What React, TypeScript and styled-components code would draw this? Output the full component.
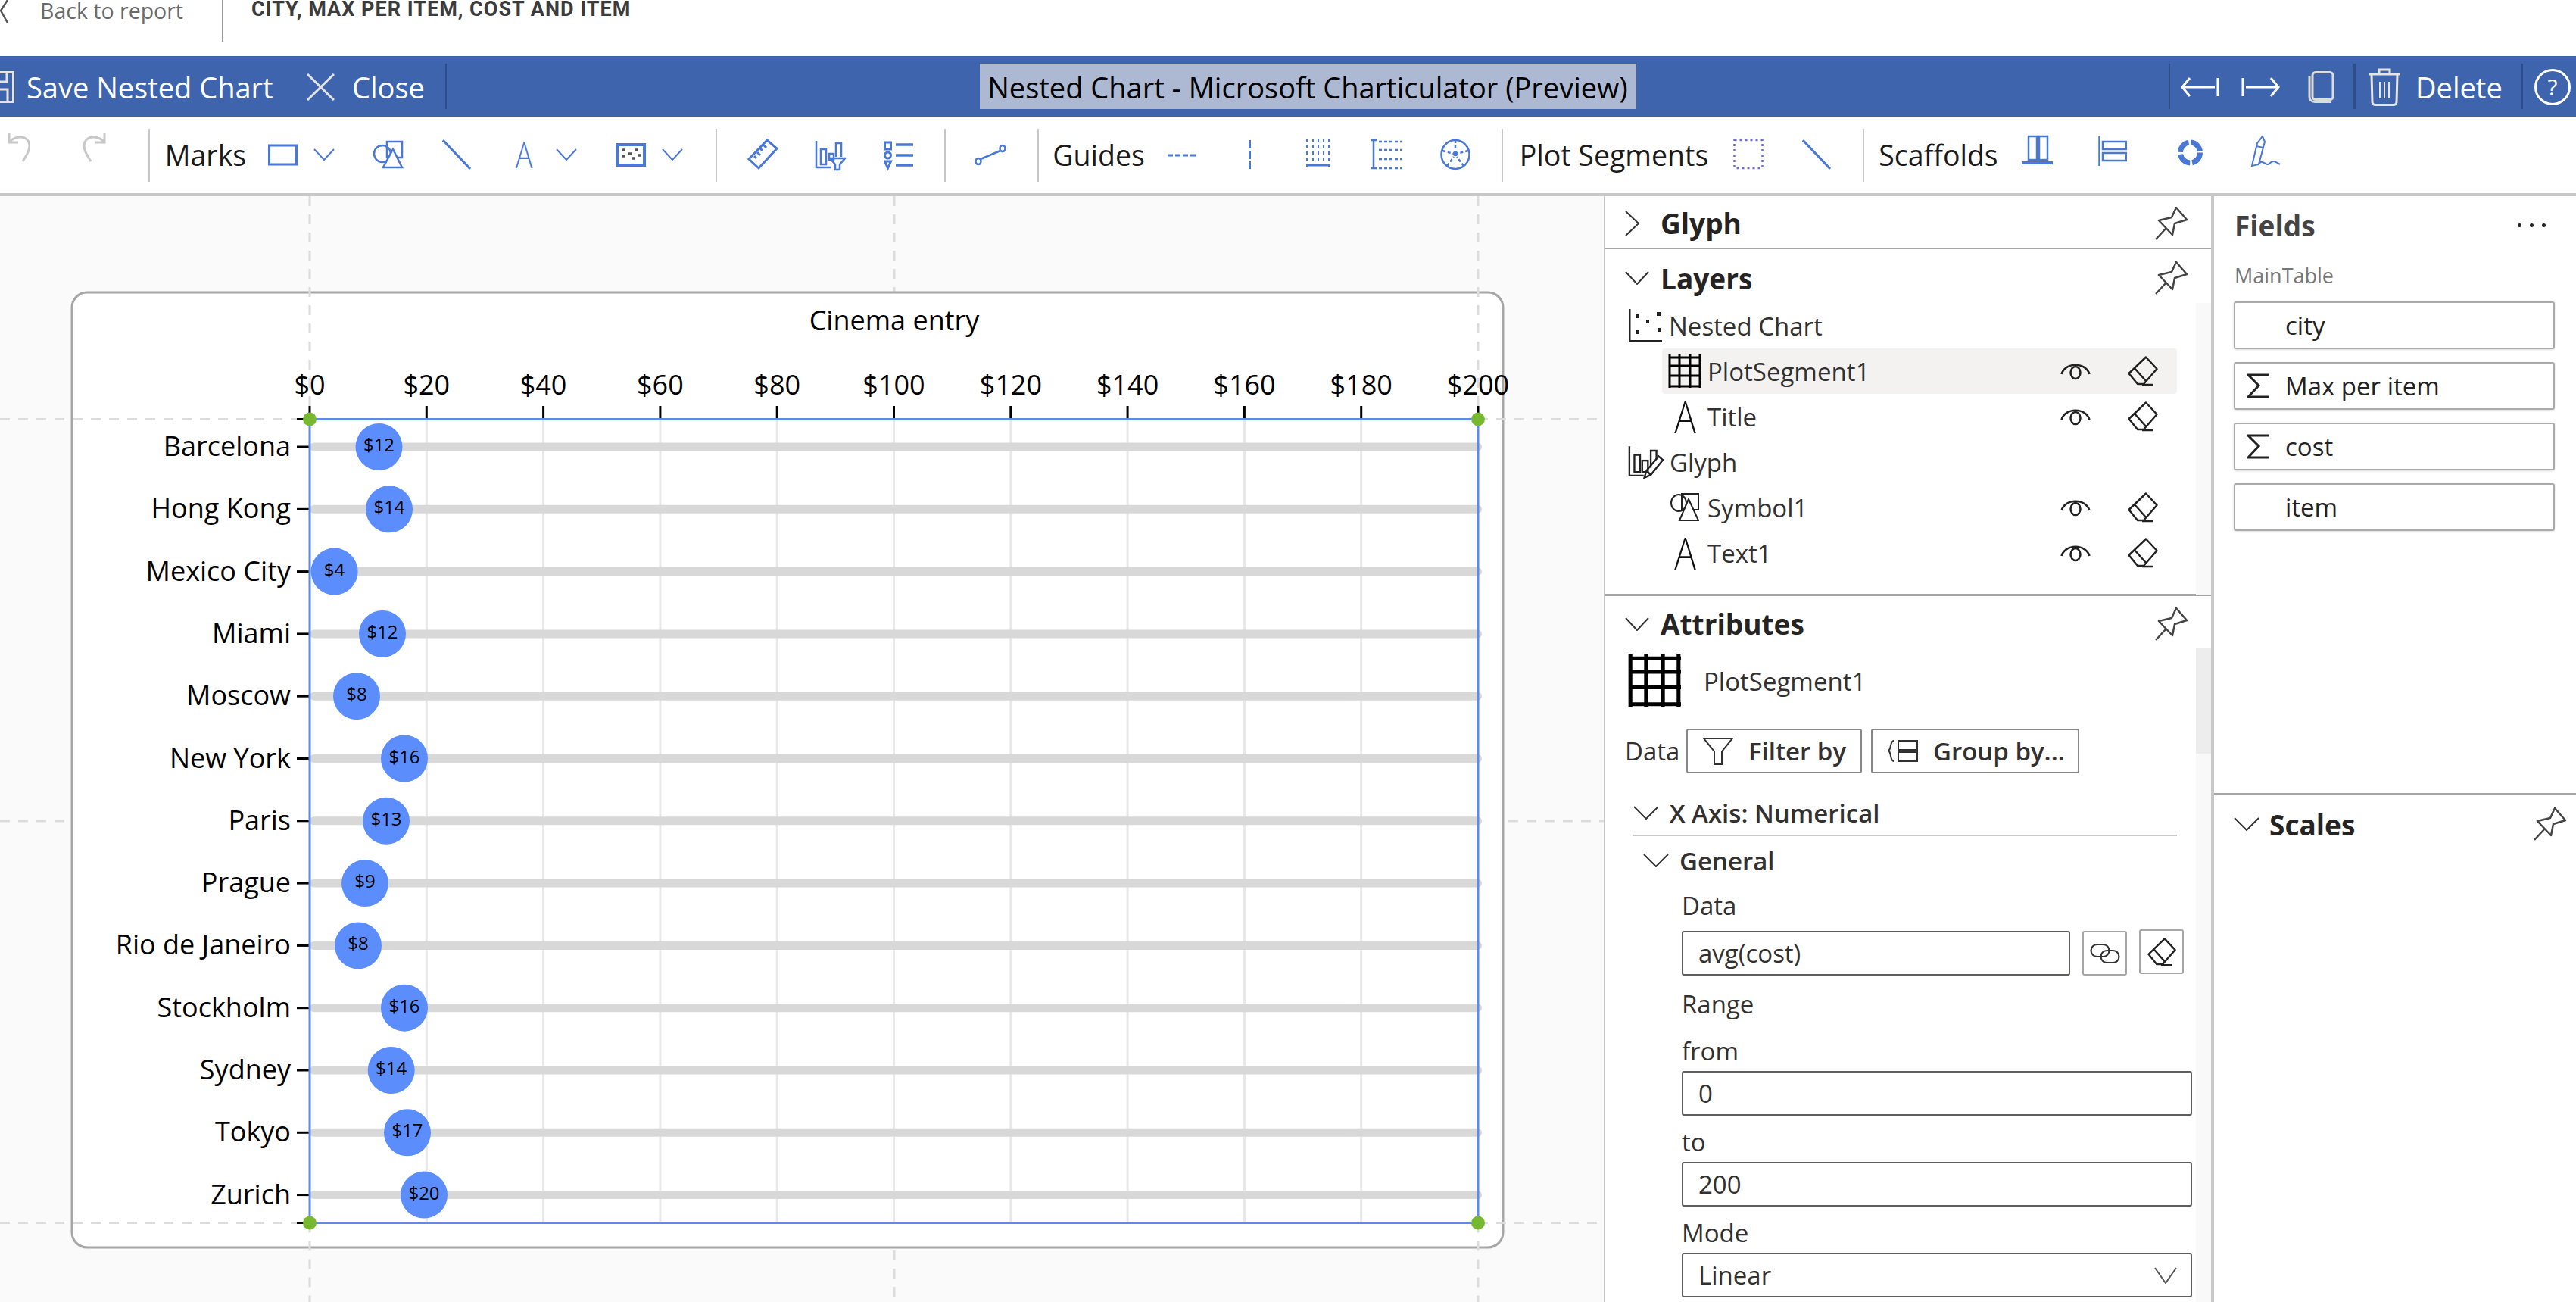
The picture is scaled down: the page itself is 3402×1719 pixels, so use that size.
import React from "react";
import styled, { createGlobalStyle } from "styled-components";

const Global = createGlobalStyle`
  html, body { margin: 0; padding: 0; background: #fff; }
  body { font-family: "Open Sans", "Noto Sans", sans-serif; color: #222; }
  #root { width: 3402px; height: 1719px; overflow: hidden; }
  * { box-sizing: border-box; }
`;

const Page = styled.div`
  width: 3402px;
  height: 1719px;
  display: flex;
  flex-direction: column;
  overflow: hidden;
`;

/* ---------- top bar ---------- */
const TopBar = styled.div`
  height: 74px;
  display: flex;
  align-items: flex-start;
  flex: none;
`;
const BackChevron = styled.svg`
  width: 12px;
  height: 32px;
  flex: none;
`;
const BackLink = styled.span`
  margin-left: 41px;
  width: 187px;
  font-size: 28.5px;
  line-height: 28px;
  color: #6a6a6a;
  white-space: nowrap;
`;
const TopDivider = styled.div`
  width: 2px;
  height: 55px;
  margin-left: 53px;
  background: #9a9a9a;
`;
const TopHeading = styled.h1`
  margin: 0 0 0 37px;
  font-family: Roboto, "Open Sans", sans-serif;
  font-weight: 700;
  font-size: 27px;
  line-height: 25px;
  letter-spacing: 1px;
  color: #3c3c3c;
  white-space: nowrap;
`;

/* ---------- blue header ---------- */
const Header = styled.header`
  height: 80px;
  flex: none;
  background: #3e64ae;
  display: flex;
  align-items: center;
  color: #fff;
  font-size: 38px;
`;
const HeaderLeft = styled.div`
  width: 590px;
  height: 60px;
  flex: none;
  display: flex;
  align-items: center;
  border-right: 2px solid #2f4d87;
  overflow: hidden;
`;
const HeaderCenter = styled.div`
  flex: 1;
  display: flex;
  justify-content: center;
`;
const TitleBox = styled.div`
  width: 867px;
  height: 60px;
  padding-top: 2px;
  background: #adb9d3;
  color: #000;
  display: flex;
  align-items: center;
  justify-content: center;
  white-space: nowrap;
`;
const HeaderRight = styled.div`
  width: 538px;
  height: 60px;
  flex: none;
  display: flex;
  align-items: center;
  border-left: 2px solid #2f4d87;
`;
const HeadSlot = styled.span<{ $ml: number; $w: number }>`
  flex: none;
  display: flex;
  align-items: center;
  padding-top: 2px;
  margin-left: ${(p) => p.$ml}px;
  width: ${(p) => p.$w}px;
  white-space: nowrap;
`;
const HeadDivider = styled.span<{ $ml: number; $w: number }>`
  flex: none;
  height: 60px;
  margin-left: ${(p) => p.$ml}px;
  width: ${(p) => p.$w}px;
  background: #2f4d87;
`;
const HelpCircle = styled.span`
  width: 48px;
  height: 48px;
  border: 3px solid #fff;
  border-radius: 50%;
  display: flex;
  align-items: center;
  justify-content: center;
  font-size: 30px;
  line-height: 1;
`;

/* ---------- toolbar ---------- */
const Toolbar = styled.div`
  height: 105px;
  flex: none;
  display: flex;
  align-items: center;
  border-bottom: 4px solid #c8c8c8;
  color: #1a1a1a;
  font-size: 37.5px;
`;
const ToolSlot = styled.span<{ $ml: number; $w: number }>`
  flex: none;
  display: flex;
  align-items: center;
  justify-content: center;
  margin-left: ${(p) => p.$ml}px;
  width: ${(p) => p.$w}px;
  height: 60px;
  white-space: nowrap;
`;
const ToolDivider = styled.span<{ $ml: number }>`
  flex: none;
  width: 2px;
  height: 70px;
  margin-left: ${(p) => p.$ml}px;
  background: #c8c8c8;
`;
const ToolGlyph = styled.span`
  font-size: 47px;
  font-weight: 300;
  line-height: 1;
  color: #4a78d6;
  transform: scaleX(0.8);
`;

/* ---------- main ---------- */
const Main = styled.div`
  flex: 1;
  min-height: 0;
  display: flex;
`;
const CanvasPane = styled.div`
  width: 2120px;
  flex: none;
  background: #fafafa;
  border-right: 2px solid #c8c8c8;
  overflow: hidden;
`;
const ChartSvg = styled.svg`
  display: block;
  width: 2118px;
  height: 1460px;
`;
const AxisText = styled.text`
  font-family: "Open Sans", sans-serif;
  font-size: 36px;
  fill: #000;
`;
const BubbleText = styled.text`
  font-family: "Open Sans", sans-serif;
  font-size: 24px;
  fill: #000;
`;

const SidePane = styled.div`
  width: 804px;
  flex: none;
  border-right: 4px solid #c8c8c8;
  display: flex;
  flex-direction: column;
  overflow: hidden;
  font-size: 33px;
  color: #323130;
`;
const SectionHead = styled.div<{ $h: number; $pt: number; $pr?: number }>`
  height: ${(p) => p.$h}px;
  padding-top: ${(p) => p.$pt}px;
  flex: none;
  display: flex;
  align-items: center;
  padding-left: 26px;
  padding-right: ${(p) => p.$pr ?? 30}px;
`;
const HeadChevronSlot = styled.span`
  width: 47px;
  flex: none;
  display: flex;
  align-items: center;
  justify-content: flex-start;
`;
const SectionTitle = styled.span`
  flex: 1;
  font-size: 37px;
  font-weight: 700;
  color: #252423;
`;
const CollapsedSection = styled.section`
  height: 70px;
  flex: none;
  border-bottom: 2px solid #a6a6a6;
`;
const LayersSection = styled.section`
  height: 458px;
  flex: none;
  border-bottom: 3px solid #a6a6a6;
`;
const SectionBody = styled.div`
  display: flex;
`;
const BodyContent = styled.div`
  flex: 1;
  min-width: 0;
`;
const ScrollTrack = styled.div<{ $h: number }>`
  width: 20px;
  flex: none;
  height: ${(p) => p.$h}px;
  background: #f9f9f9;
`;
const ScrollThumb = styled.div`
  height: 139px;
  background: #ededed;
`;
const TreeRow = styled.div<{ $child?: boolean; $active?: boolean }>`
  height: 60px;
  display: flex;
  align-items: center;
  margin-left: ${(p) => (p.$child ? 75 : 30)}px;
  margin-right: 25px;
  padding-left: ${(p) => (p.$child ? 8 : 0)}px;
  padding-right: 25px;
  border-radius: 4px;
  background: ${(p) => (p.$active ? "#f3f2f1" : "transparent")};
`;
const TreeIconSlot = styled.span<{ $w: number }>`
  width: ${(p) => p.$w}px;
  flex: none;
  display: flex;
  align-items: center;
  justify-content: center;
`;
const TreeLetter = styled.span`
  font-size: 58px;
  font-weight: 300;
  line-height: 1;
  color: #111;
  transform: scaleX(0.82);
`;
const TreeLabel = styled.span`
  flex: 1;
  margin-left: 8px;
  white-space: nowrap;
`;
const TreeActions = styled.span`
  display: flex;
  align-items: center;
  gap: 49px;
`;

const AttrSection = styled.section`
  flex: 1;
  min-height: 0;
  overflow: hidden;
`;
const IdentityRow = styled.div`
  margin-top: 7px;
  height: 70px;
  display: flex;
  align-items: center;
  padding-left: 30px;
  gap: 30px;
`;
const IdentityName = styled.span`
  padding-top: 3px;
`;
const DataRow = styled.div`
  margin-top: 29px;
  height: 59px;
  display: flex;
  align-items: center;
  padding-left: 26px;
  gap: 12px;
`;
const DataLabel = styled.span`
  width: 69px;
`;
const OutlineButton = styled.div<{ $w: number }>`
  width: ${(p) => p.$w}px;
  height: 59px;
  border: 2px solid #8a8886;
  border-radius: 3px;
  display: flex;
  align-items: center;
  padding-left: 20px;
  gap: 20px;
  font-weight: 600;
  color: #323130;
  white-space: nowrap;
`;
const AxisHead = styled.div`
  margin: 23px 25px 0 37px;
  height: 60px;
  border-bottom: 2px solid #c8c8c8;
  display: flex;
  align-items: center;
  gap: 14px;
  font-weight: 600;
`;
const GeneralHead = styled.div`
  margin: 0 0 0 50px;
  height: 64px;
  display: flex;
  align-items: center;
  gap: 14px;
  font-weight: 600;
`;
const FieldBlock = styled.div`
  padding-left: 101px;
  padding-right: 5px;
`;
const FieldLabel = styled.div<{ $mt: number }>`
  margin-top: ${(p) => p.$mt}px;
  height: 40px;
  line-height: 40px;
`;
const InputRow = styled.div`
  margin-top: 13px;
  display: flex;
  align-items: flex-start;
`;
const ValueBox = styled.div<{ $w?: number; $mt?: number }>`
  width: ${(p) => (p.$w ? `${p.$w}px` : "100%")};
  height: 59px;
  margin-top: ${(p) => p.$mt ?? 0}px;
  border: 2px solid #605e5c;
  border-radius: 3px;
  display: flex;
  align-items: center;
  justify-content: space-between;
  padding: 0 18px 0 20px;
`;
const SquareButton = styled.div<{ $ml: number; $mt: number }>`
  width: 59px;
  height: 59px;
  margin-left: ${(p) => p.$ml}px;
  margin-top: ${(p) => p.$mt}px;
  border: 2px solid #a6a6a6;
  border-radius: 3px;
  display: flex;
  align-items: center;
  justify-content: center;
`;

/* ---------- fields pane ---------- */
const FieldsPane = styled.div`
  flex: 1;
  min-width: 0;
  display: flex;
  flex-direction: column;
  font-size: 33px;
`;
const FieldsBody = styled.div`
  height: 790px;
  flex: none;
  border-bottom: 2px solid #a6a6a6;
  padding: 0 28px 0 26px;
`;
const FieldsHead = styled.div`
  height: 76px;
  display: flex;
  align-items: center;
  justify-content: space-between;
  padding-left: 1px;
  padding-right: 12px;
`;
const FieldsTitle = styled.span`
  font-size: 37px;
  font-weight: 700;
  color: #444;
`;
const MoreDots = styled.span`
  display: flex;
  gap: 11px;
`;
const Dot = styled.i`
  width: 5px;
  height: 5px;
  background: #222;
  border-radius: 50%;
`;
const TableName = styled.div`
  height: 63px;
  padding: 9px 0 0 1px;
  font-size: 27px;
  line-height: 40px;
  color: #777;
`;
const FieldList = styled.div`
  display: flex;
  flex-direction: column;
  gap: 17px;
`;
const FieldBox = styled.div`
  height: 63px;
  border: 2px solid #aaa;
  border-radius: 3px;
  box-shadow: 0 1px 3px rgba(0, 0, 0, 0.15);
  display: flex;
  align-items: center;
  padding-left: 15px;
  color: #222;
`;
const SigmaSlot = styled.span`
  width: 51px;
  flex: none;
  display: flex;
  align-items: center;
`;

/* ---------- icons ---------- */
const BLUE = "#4a78d6";
const Ico = ({ w, h = 60, children, stroke = BLUE, sw = 3 }: any) => (
  <svg width={w} height={h} viewBox={`0 0 ${w} ${h}`} fill="none" stroke={stroke} strokeWidth={sw}>
    {children}
  </svg>
);
const Chevron = () => (
  <Ico w={28} sw={2}>
    <path d="M1 22 L14 36 L27 22" />
  </Ico>
);
const DownChevron = ({ w = 32, h = 18, stroke = "#333" }: any) => (
  <svg width={w} height={h} viewBox={`0 0 ${w} ${h}`} fill="none" stroke={stroke} strokeWidth={2}>
    <path d={`M1 1 L${w / 2} ${h - 1} L${w - 1} 1`} />
  </svg>
);
const RightChevron = () => (
  <svg width="20" height="34" viewBox="0 0 20 34" fill="none" stroke="#333" strokeWidth={2}>
    <path d="M1 1 L18 17 L1 33" />
  </svg>
);
const Pin = () => (
  <svg width="44" height="44" viewBox="0 0 44 44" fill="none" stroke="#444" strokeWidth={2.5} strokeLinejoin="round">
    <path d="M28 1 L42 17 L26 22 L23 37 L5 18 L22 14 Z M1 43 L14 29" />
  </svg>
);
const Eye = () => (
  <svg width="40" height="26" viewBox="0 0 40 26" fill="none" stroke="#222" strokeWidth={2.5}>
    <path d="M1.5 17 A19 16 0 0 1 38.5 17" />
    <ellipse cx="20" cy="15" rx="6.5" ry="8" />
  </svg>
);
const Eraser = ({ s = 40 }: any) => (
  <svg width={s} height={s} viewBox="0 0 40 40" fill="none" stroke="#222" strokeWidth={2.5} strokeLinejoin="round">
    <path d="M24 1.5 L38.5 17 L21 37 L13 37 L1.5 23 Z M8 15 L24 33 M19 38 H34" />
  </svg>
);
const GridIcon = ({ s, sw }: any) => (
  <svg width={s} height={s} viewBox="0 0 44 44" fill="none" stroke="#000" strokeWidth={sw}>
    <path d="M2 4 H44 M2 15 H44 M2 28 H44 M2 42 H44 M2 0 V44 M15 0 V44 M29 0 V44 M42 0 V44" />
  </svg>
);
const ChartDots = () => (
  <svg width="44" height="44" viewBox="0 0 44 44" fill="#222" stroke="none">
    <path d="M0 0 H2.5 V41 H44 V44 H0 Z" />
    <rect x="10" y="7" width="4" height="5" />
    <rect x="37" y="4" width="5" height="5" />
    <rect x="23" y="14" width="4" height="5" />
    <rect x="10" y="28" width="4" height="5" />
    <rect x="39" y="25" width="4" height="5" />
  </svg>
);
const GlyphChart = () => (
  <svg width="47" height="44" viewBox="0 0 50 44" fill="none" stroke="#222" strokeWidth={2.5}>
    <path d="M2 0 V41 H22" />
    <rect x="9" y="12" width="8" height="24" />
    <rect x="20" y="20" width="8" height="16" />
    <path d="M32 30 V6 H40 V18" />
    <path d="M23 44 L26 34 L43 14 L49 19 L32 40 Z M26 34 L32 40" />
  </svg>
);
const SymbolSmall = () => (
  <svg width="38" height="38" viewBox="0 0 38 38" fill="none" stroke="#222" strokeWidth={2}>
    <ellipse cx="11" cy="13" rx="10" ry="11" />
    <rect x="15" y="1" width="22" height="21" />
    <path d="M24 8 L37 36 H12 Z" fill="#fff" />
  </svg>
);
const FunnelIcon = () => (
  <svg width="40" height="36" viewBox="0 0 40 36" fill="none" stroke="#323130" strokeWidth={2}>
    <path d="M1 1 H39 L25 18 V35 H15 V18 Z" />
  </svg>
);
const GroupIcon = () => (
  <svg width="40" height="30" viewBox="0 0 40 30" fill="none" stroke="#323130" strokeWidth={2}>
    <rect x="14" y="1" width="25" height="12" />
    <rect x="14" y="16" width="25" height="12" />
    <path d="M8 1 C3 1 5 12 1 14 C5 16 3 28 8 28" />
  </svg>
);
const LinkIcon = () => (
  <svg width="40" height="28" viewBox="0 0 40 28" fill="none" stroke="#333" strokeWidth={2.2}>
    <rect x="1.5" y="2" width="24" height="16" rx="8" />
    <rect x="14.5" y="10" width="24" height="16" rx="8" />
  </svg>
);
const Sigma = () => (
  <svg width="30" height="33" viewBox="0 0 30 33" fill="none" stroke="#222" strokeWidth={3}>
    <path d="M0 2 H30 M2 2 L16 16 L2 31 H30" />
  </svg>
);

const MARK = { rows: [
  ["Barcelona", "$12", 500.5], ["Hong Kong", "$14", 514], ["Mexico City", "$4", 441.6],
  ["Miami", "$12", 505], ["Moscow", "$8", 471], ["New York", "$16", 534],
  ["Paris", "$13", 510], ["Prague", "$9", 482], ["Rio de Janeiro", "$8", 473],
  ["Stockholm", "$16", 534], ["Sydney", "$14", 516.7], ["Tokyo", "$17", 538], ["Zurich", "$20", 560],
] as [string, string, number][] };

const TICKS = ["$0","$20","$40","$60","$80","$100","$120","$140","$160","$180","$200"];
const PL = 409, PR = 1952, PT = 553.5, PB = 1614.5;
const DASH = { stroke: "#dcdcdc", strokeWidth: 3, strokeDasharray: "13 11" };

const Chart = () => (
  <ChartSvg viewBox="0 259 2118 1460">
    <g {...DASH}>
      <path d="M1181 259 V1719 M0 1084 H2118" />
    </g>
    <rect x="95" y="386" width="1890" height="1261" rx="20" fill="#fff" stroke="#a6a6a6" strokeWidth="3" />
    <g {...DASH}>
      <path d={`M${PL} 259 V${PT} M${PR} 259 V${PT} M${PL} ${PB} V1719 M${PR} ${PB} V1719 M0 ${PT} H${PL} M${PR} ${PT} H2118 M0 ${PB} H${PL} M${PR} ${PB} H2118`} />
    </g>
    <AxisText x="1181" y="436" textAnchor="middle">Cinema entry</AxisText>
    {TICKS.map((t, i) => {
      const x = PL + (i * (PR - PL)) / 10;
      return (
        <g key={t}>
          {i > 0 && i < 10 && <line x1={x} x2={x} y1={PT} y2={PB} stroke="#e8e8e8" strokeWidth="3" />}
          <line x1={x} x2={x} y1="536" y2={PT} stroke="#000" strokeWidth="3" />
          <AxisText x={x} y="521" textAnchor="middle">{t}</AxisText>
        </g>
      );
    })}
    {MARK.rows.map(([city], i) => {
      const y = 590 + i * 82.3;
      return (
        <g key={city}>
          <rect x={PL} y={y - 5.5} width={1548} height="11" rx="5.5" fill="#d8d8d8" />
          <line x1="392" x2={PL} y1={y} y2={y} stroke="#000" strokeWidth="3" />
          <AxisText x="384" y={y + 12} textAnchor="end">{city}</AxisText>
        </g>
      );
    })}
    <line x1="392" x2={PL} y1={PT} y2={PT} stroke="#000" strokeWidth="3" />
    <line x1="392" x2={PL} y1={PB} y2={PB} stroke="#000" strokeWidth="3" />
    <rect x={PL} y={PT} width={PR - PL} height={PB - PT} fill="none" stroke="#5f89e6" strokeWidth="3" />
    {MARK.rows.map(([city, v, cx], i) => {
      const y = 590 + i * 82.3;
      return (
        <g key={city}>
          <circle cx={cx} cy={y} r="31" fill="#5b8dfc" />
          <BubbleText x={cx} y={y + 6} textAnchor="middle">{v}</BubbleText>
        </g>
      );
    })}
    {[[PL, PT], [PR, PT], [PL, PB], [PR, PB]].map(([x, y], i) => (
      <circle key={i} cx={x} cy={y} r="9" fill="#76b82f" />
    ))}
  </ChartSvg>
);

const Tools = () => (
  <Toolbar>
    <ToolSlot $ml={10} $w={30}>
      <Ico w={30} stroke="#c8c8c8"><path d="M2 1 V13 H14 M2 13 C10 3 28 3 29 17 C29 24 25 30 20 38" /></Ico>
    </ToolSlot>
    <ToolSlot $ml={70} $w={30}>
      <Ico w={30} stroke="#c8c8c8"><path d="M28 1 V13 H16 M28 13 C20 3 2 3 1 17 C1 24 5 30 10 38" /></Ico>
    </ToolSlot>
    <ToolDivider $ml={56} />
    <ToolSlot $ml={21} $w={105}>Marks</ToolSlot>
    <ToolSlot $ml={30} $w={39}><Ico w={39}><rect x="1.5" y="17" width="36" height="25" /></Ico></ToolSlot>
    <ToolSlot $ml={21} $w={28}><Chevron /></ToolSlot>
    <ToolSlot $ml={51} $w={40}>
      <Ico w={40} sw={2.5}>
        <ellipse cx="12" cy="28" rx="11" ry="11" />
        <rect x="18" y="12" width="20" height="21" />
        <path d="M26 22 L38 46 H13 Z" fill="#fff" />
      </Ico>
    </ToolSlot>
    <ToolSlot $ml={51} $w={38}><Ico w={38}><path d="M1 10 L37 48" /></Ico></ToolSlot>
    <ToolSlot $ml={58} $w={24}><ToolGlyph>A</ToolGlyph></ToolSlot>
    <ToolSlot $ml={30} $w={28}><Chevron /></ToolSlot>
    <ToolSlot $ml={51} $w={40}>
      <Ico w={40} sw={4}>
        <rect x="2" y="16" width="36" height="27" />
        <path d="M9 23 H13 M17 28 H21 M25 23 H29 M9 31 H13 M21 34 H25 M29 30 H33" strokeWidth={3.5} stroke="#555" />
      </Ico>
    </ToolSlot>
    <ToolSlot $ml={21} $w={28}><Chevron /></ToolSlot>
    <ToolDivider $ml={43} />
    <ToolSlot $ml={40} $w={40}>
      <Ico w={40}>
        <path d="M26 10 L39 21 L15 47 L2 35 Z M21 16 L25 20 M17 21 L20 24 M13 26 L17 30 M9 31 L12 34" />
      </Ico>
    </ToolSlot>
    <ToolSlot $ml={49} $w={41}>
      <Ico w={41} sw={2.5}>
        <path d="M2 11 V46 H22" />
        <rect x="8" y="22" width="7" height="20" />
        <rect x="19" y="28" width="6" height="8" />
        <path d="M28 32 V14 H35 V32" />
        <path d="M20 34 H40 L33 42 V49 H27 V42 Z" />
      </Ico>
    </ToolSlot>
    <ToolSlot $ml={50} $w={39}>
      <Ico w={39}>
        <rect x="1.5" y="13" width="8" height="9" />
        <circle cx="5.5" cy="30" r="4" />
        <path d="M1.5 38 H9.5 L5.5 47 Z" />
        <path d="M16 16 H39 M16 30 H39 M16 43 H39" strokeWidth={3.5} />
      </Ico>
    </ToolSlot>
    <ToolDivider $ml={41} />
    <ToolSlot $ml={38} $w={42}>
      <Ico w={42} sw={2.5}>
        <ellipse cx="5" cy="38" rx="3.5" ry="4" />
        <ellipse cx="37" cy="21" rx="3.5" ry="4" />
        <path d="M8 35 L34 24" />
      </Ico>
    </ToolSlot>
    <ToolDivider $ml={41} />
    <ToolSlot $ml={19} $w={120}>Guides</ToolSlot>
    <ToolSlot $ml={31} $w={39}><Ico w={39}><path d="M0 30 H39" strokeDasharray="7 3" /></Ico></ToolSlot>
    <ToolSlot $ml={68} $w={3}><Ico w={3}><path d="M1.5 10 V48" strokeDasharray="11 3" /></Ico></ToolSlot>
    <ToolSlot $ml={72} $w={33}>
      <Ico w={33} sw={2}>
        <path d="M2 9 V47 M31 9 V47 M10 9 V40 M17 9 V40 M24 9 V40" strokeDasharray="4 4" />
        <path d="M2 43 H31" strokeWidth={3} />
      </Ico>
    </ToolSlot>
    <ToolSlot $ml={54} $w={40}>
      <Ico w={40} sw={2.5}>
        <path d="M3 9 V48 M0 10 H7 M0 47 H7" />
        <path d="M10 12 H40 M10 23 H40 M10 35 H40 M10 47 H40" strokeDasharray="4 3" />
      </Ico>
    </ToolSlot>
    <ToolSlot $ml={51} $w={40}>
      <Ico w={40} sw={2.5}>
        <ellipse cx="20" cy="29" rx="18.5" ry="19" />
        <path d="M20 10 V25 M3 24 L18 28 M37 24 L22 28 M9 44 L18 32 M31 44 L22 32" strokeDasharray="4 3" />
        <circle cx="20" cy="28" r="2" fill={BLUE} />
      </Ico>
    </ToolSlot>
    <ToolDivider $ml={41} />
    <ToolSlot $ml={19} $w={255}>Plot Segments</ToolSlot>
    <ToolSlot $ml={30} $w={40}>
      <Ico w={40} stroke="#6f6cd6" sw={2.5}><rect x="1.5" y="10" width="37" height="37" strokeDasharray="3 4" /></Ico>
    </ToolSlot>
    <ToolSlot $ml={51} $w={38}><Ico w={38}><path d="M1 10 L37 48" /></Ico></ToolSlot>
    <ToolDivider $ml={42} />
    <ToolSlot $ml={19} $w={158}>Scaffolds</ToolSlot>
    <ToolSlot $ml={31} $w={41}>
      <Ico w={41} sw={2.5}>
        <rect x="9" y="5" width="11" height="31" />
        <rect x="23" y="5" width="11" height="31" />
        <path d="M0 40 H41" strokeWidth={4} />
      </Ico>
    </ToolSlot>
    <ToolSlot $ml={60} $w={38}>
      <Ico w={38} sw={2.5}>
        <path d="M1.5 5 V44" />
        <rect x="6" y="12" width="31" height="10" />
        <rect x="6" y="27" width="31" height="10" />
      </Ico>
    </ToolSlot>
    <ToolSlot $ml={67} $w={33}>
      <Ico w={33} sw={7}>
        <ellipse cx="16.5" cy="26.5" rx="13" ry="13.5" strokeDasharray="18 3" />
      </Ico>
    </ToolSlot>
    <ToolSlot $ml={63} $w={40}>
      <Ico w={40} sw={2}>
        <path d="M2 44 L9 14 L16 5 L19 12 L11 42 Z M8 18 L17 20" />
        <path d="M10 43 C16 32 20 46 25 41 S32 38 39 42" />
      </Ico>
    </ToolSlot>
  </Toolbar>
);

const RowActions = () => (
  <TreeActions>
    <Eye />
    <Eraser />
  </TreeActions>
);

const App = () => (
  <Page>
    <Global />
    <TopBar>
      <BackChevron viewBox="0 0 12 32" fill="none" stroke="#555" strokeWidth={2.5}>
        <path d="M10 0 L1 14 L10 30" />
      </BackChevron>
      <BackLink>Back to report</BackLink>
      <TopDivider />
      <TopHeading>CITY, MAX PER ITEM, COST AND ITEM</TopHeading>
    </TopBar>

    <Header>
      <HeaderLeft>
        <HeadSlot $ml={-23} $w={42}>
          <svg width="42" height="42" viewBox="0 0 42 42" fill="none" stroke="#e4e4e4" strokeWidth={3}>
            <path d="M1.5 1.5 H40.5 V40.5 H1.5 Z M12 1.5 V14 H32 V1.5 M10 40.5 V24 H33 V40.5" />
          </svg>
        </HeadSlot>
        <HeadSlot $ml={16} $w={354}>Save Nested Chart</HeadSlot>
        <HeadSlot $ml={16} $w={37}>
          <svg width="37" height="36" viewBox="0 0 37 36" fill="none" stroke="#e4e4e4" strokeWidth={3}>
            <path d="M1 1 L36 35 M36 1 L1 35" />
          </svg>
        </HeadSlot>
        <HeadSlot $ml={23} $w={95}>Close</HeadSlot>
      </HeaderLeft>
      <HeaderCenter>
        <TitleBox>Nested Chart - Microsoft Charticulator (Preview)</TitleBox>
      </HeaderCenter>
      <HeaderRight>
        <HeadSlot $ml={14} $w={51}>
          <svg width="51" height="26" viewBox="0 0 51 26" fill="none" stroke="#fff" strokeWidth={3}>
            <path d="M2 13 H45 M12 1 L2 13 L12 25 M49 1 V25" />
          </svg>
        </HeadSlot>
        <HeadSlot $ml={29} $w={51}>
          <svg width="51" height="26" viewBox="0 0 51 26" fill="none" stroke="#fff" strokeWidth={3}>
            <path d="M49 13 H6 M39 1 L49 13 L39 25 M2 1 V25" />
          </svg>
        </HeadSlot>
        <HeadSlot $ml={37} $w={35}>
          <svg width="35" height="42" viewBox="0 0 35 42" fill="none" stroke="#dcdcdc" strokeWidth={3}>
            <rect x="6" y="1.5" width="27" height="36" rx="4" />
            <path d="M2 6 V34 C2 38 5 40.5 9 40.5 H30" />
          </svg>
        </HeadSlot>
        <HeadDivider $ml={25} $w={3} />
        <HeadSlot $ml={17} $w={42}>
          <svg width="42" height="50" viewBox="0 0 42 50" fill="none" stroke="#e4e4e4" strokeWidth={3}>
            <path d="M0 8 H42 M14 8 V2 H28 V8 M4 8 L5 45 C5 47 7 48.5 9 48.5 H33 C35 48.5 37 47 37 45 L38 8" />
            <path d="M15 18 V40 M21 18 V40 M27 18 V40" strokeWidth={2} />
          </svg>
        </HeadSlot>
        <HeadSlot $ml={20} $w={112}>Delete</HeadSlot>
        <HeadDivider $ml={28} $w={2} />
        <HeadSlot $ml={15} $w={48}><HelpCircle>?</HelpCircle></HeadSlot>
      </HeaderRight>
    </Header>

    <Tools />

    <Main>
      <CanvasPane>
        <Chart />
      </CanvasPane>

      <SidePane>
        <CollapsedSection>
          <SectionHead $h={68} $pt={3}>
            <HeadChevronSlot><RightChevron /></HeadChevronSlot>
            <SectionTitle>Glyph</SectionTitle>
            <Pin />
          </SectionHead>
        </CollapsedSection>

        <LayersSection>
          <SectionHead $h={71} $pt={5}>
            <HeadChevronSlot><DownChevron /></HeadChevronSlot>
            <SectionTitle>Layers</SectionTitle>
            <Pin />
          </SectionHead>
          <SectionBody>
            <BodyContent>
              <TreeRow>
                <TreeIconSlot $w={46}><ChartDots /></TreeIconSlot>
                <TreeLabel>Nested Chart</TreeLabel>
              </TreeRow>
              <TreeRow $child $active>
                <TreeIconSlot $w={44}><GridIcon s={44} sw={3} /></TreeIconSlot>
                <TreeLabel>PlotSegment1</TreeLabel>
                <RowActions />
              </TreeRow>
              <TreeRow $child>
                <TreeIconSlot $w={44}><TreeLetter>A</TreeLetter></TreeIconSlot>
                <TreeLabel>Title</TreeLabel>
                <RowActions />
              </TreeRow>
              <TreeRow>
                <TreeIconSlot $w={47}><GlyphChart /></TreeIconSlot>
                <TreeLabel>Glyph</TreeLabel>
              </TreeRow>
              <TreeRow $child>
                <TreeIconSlot $w={44}><SymbolSmall /></TreeIconSlot>
                <TreeLabel>Symbol1</TreeLabel>
                <RowActions />
              </TreeRow>
              <TreeRow $child>
                <TreeIconSlot $w={44}><TreeLetter>A</TreeLetter></TreeIconSlot>
                <TreeLabel>Text1</TreeLabel>
                <RowActions />
              </TreeRow>
            </BodyContent>
            <ScrollTrack $h={386} />
          </SectionBody>
        </LayersSection>

        <AttrSection>
          <SectionHead $h={69} $pt={4}>
            <HeadChevronSlot><DownChevron /></HeadChevronSlot>
            <SectionTitle>Attributes</SectionTitle>
            <Pin />
          </SectionHead>
          <SectionBody>
            <BodyContent>
              <IdentityRow>
                <GridIcon s={70} sw={3.2} />
                <IdentityName>PlotSegment1</IdentityName>
              </IdentityRow>
              <DataRow>
                <DataLabel>Data</DataLabel>
                <OutlineButton $w={232}><FunnelIcon />Filter by</OutlineButton>
                <OutlineButton $w={275}><GroupIcon />Group by...</OutlineButton>
              </DataRow>
              <AxisHead><DownChevron w={34} />X Axis: Numerical</AxisHead>
              <GeneralHead><DownChevron w={34} />General</GeneralHead>
              <FieldBlock>
                <FieldLabel $mt={8}>Data</FieldLabel>
                <InputRow>
                  <ValueBox $w={513}>avg(cost)</ValueBox>
                  <SquareButton $ml={16} $mt={0}><LinkIcon /></SquareButton>
                  <SquareButton $ml={16} $mt={-2}><Eraser s={38} /></SquareButton>
                </InputRow>
                <FieldLabel $mt={18}>Range</FieldLabel>
                <FieldLabel $mt={22}>from</FieldLabel>
                <ValueBox $mt={6}>0</ValueBox>
                <FieldLabel $mt={15}>to</FieldLabel>
                <ValueBox $mt={6}>200</ValueBox>
                <FieldLabel $mt={15}>Mode</FieldLabel>
                <ValueBox $mt={6}>
                  Linear
                  <DownChevron w={30} h={22} stroke="#555" />
                </ValueBox>
              </FieldBlock>
            </BodyContent>
            <ScrollTrack $h={900}><ScrollThumb /></ScrollTrack>
          </SectionBody>
        </AttrSection>
      </SidePane>

      <FieldsPane>
        <FieldsBody>
          <FieldsHead>
            <FieldsTitle>Fields</FieldsTitle>
            <MoreDots><Dot /><Dot /><Dot /></MoreDots>
          </FieldsHead>
          <TableName>MainTable</TableName>
          <FieldList>
            <FieldBox><SigmaSlot />city</FieldBox>
            <FieldBox><SigmaSlot><Sigma /></SigmaSlot>Max per item</FieldBox>
            <FieldBox><SigmaSlot><Sigma /></SigmaSlot>cost</FieldBox>
            <FieldBox><SigmaSlot />item</FieldBox>
          </FieldList>
        </FieldsBody>
        <SectionHead $h={78} $pt={0} $pr={12}>
          <HeadChevronSlot><DownChevron w={34} /></HeadChevronSlot>
          <SectionTitle>Scales</SectionTitle>
          <Pin />
        </SectionHead>
      </FieldsPane>
    </Main>
  </Page>
);

export default App;
